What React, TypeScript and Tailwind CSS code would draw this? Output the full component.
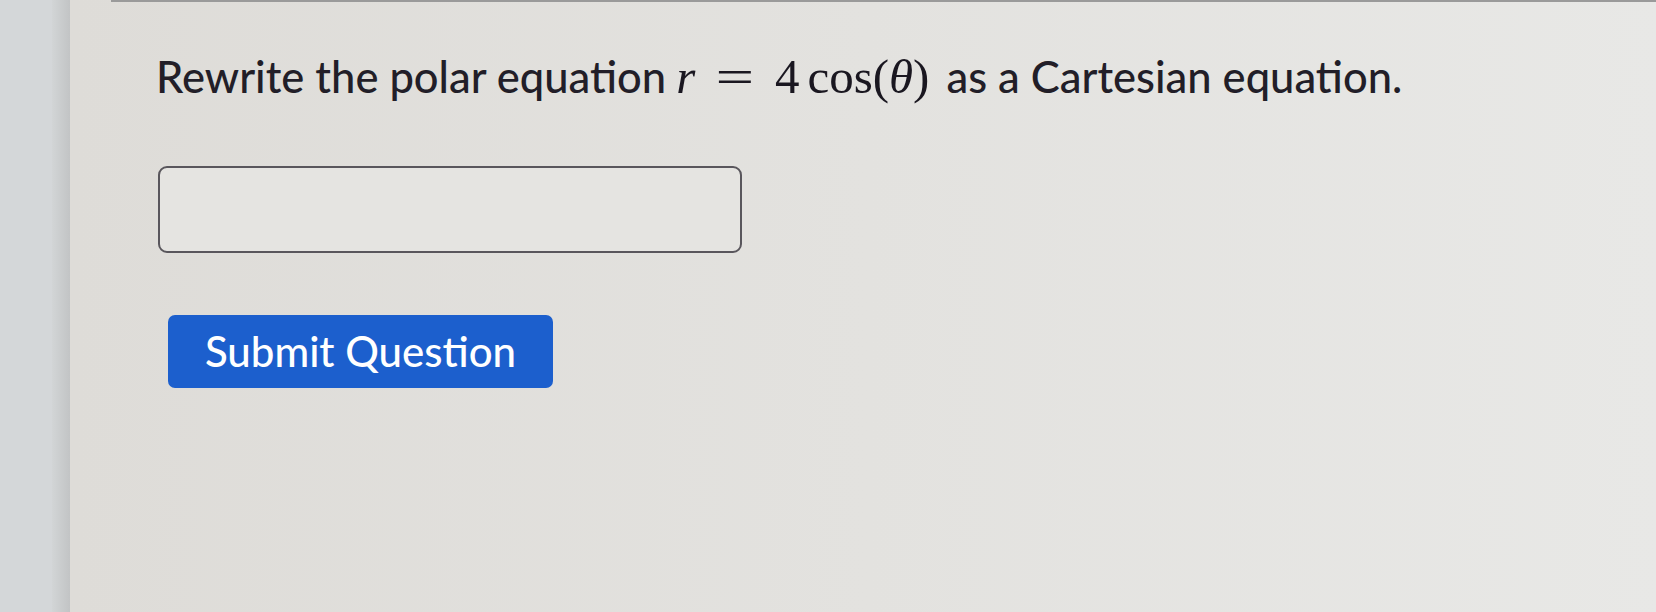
export default function App() {
  return (
    <div className="flex h-[612px] w-[1656px] overflow-hidden" style={{ fontFamily: "Lato, 'Noto Sans', sans-serif" }}>
      <div className="w-[52px] bg-[#d4d7d9]" />
      <div className="w-[18px] bg-gradient-to-r from-[#d2d5d6] to-[#c2c4c5]" />
      <div className="flex flex-1 flex-col bg-gradient-to-r from-[#dedcd8] via-[#e3e2df] to-[#e8e8e6]">
        <div className="ml-[41px] h-[2px] bg-[#9a9a9a]" />
        <div className="flex flex-col items-start pl-[86px] pt-[46px]">
          <p className="flex h-[56px] items-baseline text-[43.5px] font-medium leading-[56px] text-[#221e28]">
            <span>Rewrite the polar equation</span>
            <span className="ml-[10px] text-[49px] text-[#1a1720]" style={{ fontFamily: "'Liberation Serif', 'DejaVu Serif', serif" }}>
              <i>r</i>
              <span className="ml-[26px] mr-[26px] inline-block scale-x-[1.4]">=</span>
              <span>4</span>
              <span className="ml-[8px]">cos(</span>
              <i>θ</i>
              <span>)</span>
            </span>
            <span className="ml-[17px]">as a Cartesian equation.</span>
          </p>
          <div className="ml-[2px] mt-[62px] h-[87px] w-[584px] rounded-[9px] border-2 border-[#59565c] bg-[#e5e4e1]" />
          <button className="ml-[12px] mt-[62px] h-[73px] w-[385px] rounded-[7px] bg-[#1c5fcd] text-[42px] font-medium text-white">
            Submit Question
          </button>
        </div>
      </div>
    </div>
  );
}
